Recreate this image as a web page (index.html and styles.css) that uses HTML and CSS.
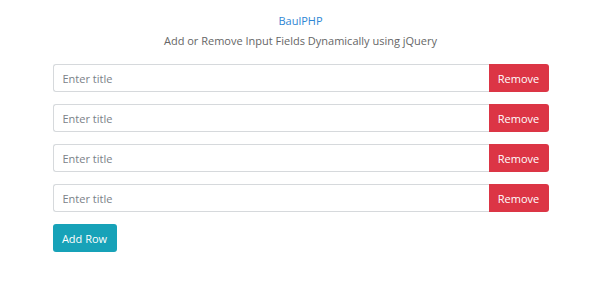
FILE: index.html
```html
<!DOCTYPE html>
<html lang="en">
<head>
    <meta charset="UTF-8">
    <meta name="viewport" content="width=device-width, initial-scale=1.0">
    <title>Add or Remove Input Fields Dynamically</title>
    <link rel="stylesheet" href="styles.css">
</head>
<body>
    <div class="container">
        <h1 class="brand">BaulPHP</h1>
        <h2 class="subtitle">Add or Remove Input Fields Dynamically using jQuery</h2>

        <div id="fields">
            <div class="field-row">
                <input type="text" name="title[]" placeholder="Enter title">
                <button type="button" class="btn btn-remove">Remove</button>
            </div>
            <div class="field-row">
                <input type="text" name="title[]" placeholder="Enter title">
                <button type="button" class="btn btn-remove">Remove</button>
            </div>
            <div class="field-row">
                <input type="text" name="title[]" placeholder="Enter title">
                <button type="button" class="btn btn-remove">Remove</button>
            </div>
            <div class="field-row">
                <input type="text" name="title[]" placeholder="Enter title">
                <button type="button" class="btn btn-remove">Remove</button>
            </div>
        </div>

        <button type="button" class="btn btn-add" id="add-row">Add Row</button>
    </div>
</body>
</html>
```

FILE: styles.css
```css
body {
    font-family: "Open Sans", Arial, sans-serif;
    background-color: #fff;
    color: #555;
    margin: 0;
    padding: 0;
}
.container {
    width: 496px;
    margin: 0 auto;
    padding: 12px 0 0 1px;
}
.brand {
    margin: 0;
    text-align: center;
    font-size: 11px;
    font-weight: normal;
    line-height: 18px;
    color: #2f86d4;
}
.subtitle {
    margin: 2px 0 14px;
    text-align: center;
    font-size: 11px;
    font-weight: normal;
    line-height: 18px;
    color: #666;
}
.field-row {
    display: flex;
    margin-bottom: 12px;
}
.field-row input {
    flex: 1;
    height: 28px;
    box-sizing: border-box;
    padding: 0 9px;
    font-family: inherit;
    font-size: 11px;
    color: #495057;
    border: 1px solid #d6d9dc;
    border-right: none;
    border-radius: 3px 0 0 3px;
    outline: none;
}
.field-row input::placeholder {
    color: #7b8288;
}
.btn {
    height: 28px;
    box-sizing: border-box;
    font-family: inherit;
    font-size: 11px;
    color: #fff;
    border: none;
    cursor: pointer;
}
.btn-remove {
    width: 60px;
    background-color: #dc3545;
    border-radius: 0 3px 3px 0;
}
.btn-add {
    width: 64px;
    background-color: #17a2b8;
    border-radius: 3px;
}
```
